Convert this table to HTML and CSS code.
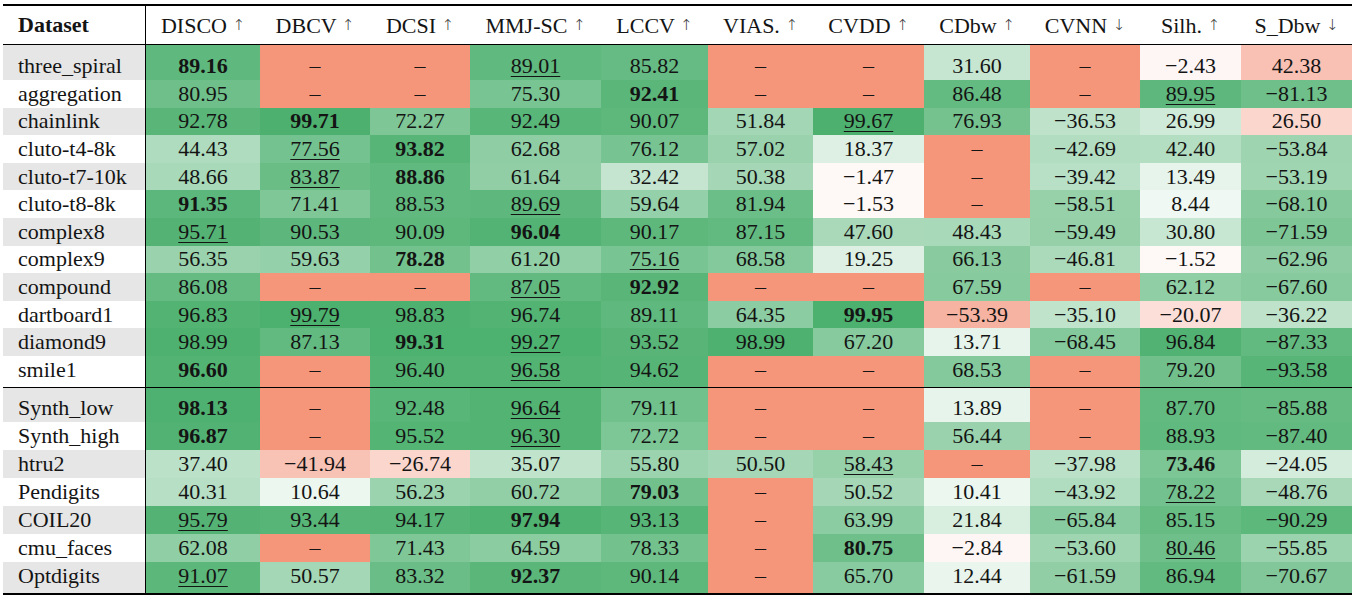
FILE: index.html
```html
<!DOCTYPE html>
<html lang="en">
<head>
<meta charset="utf-8">
<title>Clustering metrics</title>
<link rel="stylesheet" href="styles.css">
</head>
<body>
<table class="results">
  <colgroup>
    <col class="c-name"><col class="c-disco"><col class="c-dbcv"><col class="c-dcsi"><col class="c-mmj"><col class="c-lccv"><col class="c-vias"><col class="c-cvdd"><col class="c-cdbw"><col class="c-cvnn"><col class="c-silh"><col class="c-sdbw">
  </colgroup>
  <thead>
    <tr>
      <th class="ds">Dataset</th>
      <th>DISCO <span class="arr">↑</span></th>
      <th>DBCV <span class="arr">↑</span></th>
      <th>DCSI <span class="arr">↑</span></th>
      <th>MMJ-SC <span class="arr">↑</span></th>
      <th>LCCV <span class="arr">↑</span></th>
      <th>VIAS. <span class="arr">↑</span></th>
      <th>CVDD <span class="arr">↑</span></th>
      <th>CDbw <span class="arr">↑</span></th>
      <th class="down">CVNN <span class="arr">↓</span></th>
      <th>Silh. <span class="arr">↑</span></th>
      <th class="down">S_Dbw <span class="arr">↓</span></th>
    </tr>
  </thead>
  <tbody class="sec1">
    <tr class="first alt"><td class="name">three_spiral</td><td><b>89.16</b></td><td class="na">–</td><td class="na">–</td><td><span class="u">89.01</span></td><td>85.82</td><td class="na">–</td><td class="na">–</td><td>31.60</td><td class="na">–</td><td>−2.43</td><td>42.38</td></tr>
    <tr><td class="name">aggregation</td><td>80.95</td><td class="na">–</td><td class="na">–</td><td>75.30</td><td><b>92.41</b></td><td class="na">–</td><td class="na">–</td><td>86.48</td><td class="na">–</td><td><span class="u">89.95</span></td><td>−81.13</td></tr>
    <tr class="alt"><td class="name">chainlink</td><td>92.78</td><td><b>99.71</b></td><td>72.27</td><td>92.49</td><td>90.07</td><td>51.84</td><td><span class="u">99.67</span></td><td>76.93</td><td>−36.53</td><td>26.99</td><td>26.50</td></tr>
    <tr><td class="name">cluto-t4-8k</td><td>44.43</td><td><span class="u">77.56</span></td><td><b>93.82</b></td><td>62.68</td><td>76.12</td><td>57.02</td><td>18.37</td><td class="na">–</td><td>−42.69</td><td>42.40</td><td>−53.84</td></tr>
    <tr class="alt"><td class="name">cluto-t7-10k</td><td>48.66</td><td><span class="u">83.87</span></td><td><b>88.86</b></td><td>61.64</td><td>32.42</td><td>50.38</td><td>−1.47</td><td class="na">–</td><td>−39.42</td><td>13.49</td><td>−53.19</td></tr>
    <tr><td class="name">cluto-t8-8k</td><td><b>91.35</b></td><td>71.41</td><td>88.53</td><td><span class="u">89.69</span></td><td>59.64</td><td>81.94</td><td>−1.53</td><td class="na">–</td><td>−58.51</td><td>8.44</td><td>−68.10</td></tr>
    <tr class="alt"><td class="name">complex8</td><td><span class="u">95.71</span></td><td>90.53</td><td>90.09</td><td><b>96.04</b></td><td>90.17</td><td>87.15</td><td>47.60</td><td>48.43</td><td>−59.49</td><td>30.80</td><td>−71.59</td></tr>
    <tr><td class="name">complex9</td><td>56.35</td><td>59.63</td><td><b>78.28</b></td><td>61.20</td><td><span class="u">75.16</span></td><td>68.58</td><td>19.25</td><td>66.13</td><td>−46.81</td><td>−1.52</td><td>−62.96</td></tr>
    <tr class="alt"><td class="name">compound</td><td>86.08</td><td class="na">–</td><td class="na">–</td><td><span class="u">87.05</span></td><td><b>92.92</b></td><td class="na">–</td><td class="na">–</td><td>67.59</td><td class="na">–</td><td>62.12</td><td>−67.60</td></tr>
    <tr><td class="name">dartboard1</td><td>96.83</td><td><span class="u">99.79</span></td><td>98.83</td><td>96.74</td><td>89.11</td><td>64.35</td><td><b>99.95</b></td><td>−53.39</td><td>−35.10</td><td>−20.07</td><td>−36.22</td></tr>
    <tr class="alt"><td class="name">diamond9</td><td>98.99</td><td>87.13</td><td><b>99.31</b></td><td><span class="u">99.27</span></td><td>93.52</td><td>98.99</td><td>67.20</td><td>13.71</td><td>−68.45</td><td>96.84</td><td>−87.33</td></tr>
    <tr class="last"><td class="name">smile1</td><td><b>96.60</b></td><td class="na">–</td><td>96.40</td><td><span class="u">96.58</span></td><td>94.62</td><td class="na">–</td><td class="na">–</td><td>68.53</td><td class="na">–</td><td>79.20</td><td>−93.58</td></tr>
  </tbody>
  <tbody class="sec2">
    <tr class="first alt"><td class="name">Synth_low</td><td><b>98.13</b></td><td class="na">–</td><td>92.48</td><td><span class="u">96.64</span></td><td>79.11</td><td class="na">–</td><td class="na">–</td><td>13.89</td><td class="na">–</td><td>87.70</td><td>−85.88</td></tr>
    <tr><td class="name">Synth_high</td><td><b>96.87</b></td><td class="na">–</td><td>95.52</td><td><span class="u">96.30</span></td><td>72.72</td><td class="na">–</td><td class="na">–</td><td>56.44</td><td class="na">–</td><td>88.93</td><td>−87.40</td></tr>
    <tr class="alt"><td class="name">htru2</td><td>37.40</td><td>−41.94</td><td>−26.74</td><td>35.07</td><td>55.80</td><td>50.50</td><td><span class="u">58.43</span></td><td class="na">–</td><td>−37.98</td><td><b>73.46</b></td><td>−24.05</td></tr>
    <tr><td class="name">Pendigits</td><td>40.31</td><td>10.64</td><td>56.23</td><td>60.72</td><td><b>79.03</b></td><td class="na">–</td><td>50.52</td><td>10.41</td><td>−43.92</td><td><span class="u">78.22</span></td><td>−48.76</td></tr>
    <tr class="alt"><td class="name">COIL20</td><td><span class="u">95.79</span></td><td>93.44</td><td>94.17</td><td><b>97.94</b></td><td>93.13</td><td class="na">–</td><td>63.99</td><td>21.84</td><td>−65.84</td><td>85.15</td><td>−90.29</td></tr>
    <tr><td class="name">cmu_faces</td><td>62.08</td><td class="na">–</td><td>71.43</td><td>64.59</td><td>78.33</td><td class="na">–</td><td><b>80.75</b></td><td>−2.84</td><td>−53.60</td><td><span class="u">80.46</span></td><td>−55.85</td></tr>
    <tr class="last alt"><td class="name">Optdigits</td><td><span class="u">91.07</span></td><td>50.57</td><td>83.32</td><td><b>92.37</b></td><td>90.14</td><td class="na">–</td><td>65.70</td><td>12.44</td><td>−61.59</td><td>86.94</td><td>−70.67</td></tr>
  </tbody>
</table>
<script src="script.js"></script>
</body>
</html>
```

FILE: styles.css
```css
* { box-sizing: border-box; }
html, body { margin: 0; background: #fff; }
body {
  padding: 4px 0 0 3px;
  font-family: "Liberation Serif", "Times New Roman", serif;
  font-size: 22px;
  color: #141414;
}
.results {
  border-collapse: separate;
  border-spacing: 0;
  table-layout: fixed;
  width: 1349px;
}
.c-name { width: 143px; }
.c-disco { width: 114px; }
.c-dbcv { width: 110px; }
.c-dcsi { width: 100px; }
.c-mmj { width: 131px; }
.c-lccv { width: 107px; }
.c-vias { width: 105px; }
.c-cvdd { width: 111px; }
.c-cdbw { width: 106px; }
.c-cvnn { width: 110px; }
.c-silh { width: 101px; }
.c-sdbw { width: 111px; }

.results th, .results td {
  padding: 0;
  text-align: center;
  vertical-align: middle;
  line-height: 24px;
  white-space: nowrap;
  font-weight: normal;
}
.results thead tr { height: 41px; }
.results thead th {
  border-top: 2px solid #000;
  border-bottom: 1px solid #000;
}
.results th.ds {
  font-weight: bold;
  text-align: left;
  padding-left: 15px;
}
.arr {
  font-family: "DejaVu Sans", sans-serif;
  font-weight: 200;
  font-size: 15px;
  vertical-align: 3px;
  color: #333;
}
.results .name, .results .ds { border-right: 1px solid #000; }
.results td.name { text-align: left; padding-left: 15px; }
.results tr.alt td.name { background: #e6e6e6; }

.sec1 tr { height: 27.6px; }
.sec2 tr { height: 28px; }
.sec1 tr.first { height: 35px; }
.sec2 tr.first { height: 34px; }
.results tr.first td { padding-top: 6px; }
.results tr.last td { padding-bottom: 3px; }
.sec1 tr.last { height: 32px; }
.sec1 tr.last td { border-bottom: 1px solid #000; }
.sec2 tr.last { height: 33px; }
.sec2 tr.last td { border-bottom: 2px solid #000; }

.results td.na { background: #f5967a; }
.results b { font-weight: bold; }
.u {
  text-decoration: underline;
  text-decoration-thickness: 1px;
  text-underline-offset: 3px;
}
```

FILE: script.js
```js
(function () {
  var heads = document.querySelectorAll('.results thead th');
  var dirs = [];
  heads.forEach(function (h, i) { dirs[i] = h.classList.contains('down') ? -1 : 1; });
  var G = [76, 176, 110];
  var R = [240, 122, 92];
  document.querySelectorAll('.results tbody tr').forEach(function (tr) {
    var cells = tr.children;
    for (var i = 1; i < cells.length; i++) {
      var td = cells[i];
      if (td.classList.contains('na')) continue;
      var v = parseFloat(td.textContent.trim().replace('\u2212', '-'));
      if (isNaN(v)) continue;
      var t = Math.max(-1, Math.min(1, dirs[i] * v / 100));
      var c = t >= 0 ? G : R;
      var a = Math.abs(t);
      if (t < 0) a = Math.min(1, a + 0.04);
      var rgb = c.map(function (x) { return Math.round(255 + (x - 255) * a); });
      td.style.backgroundColor = 'rgb(' + rgb.join(',') + ')';
    }
  });
})();
```
